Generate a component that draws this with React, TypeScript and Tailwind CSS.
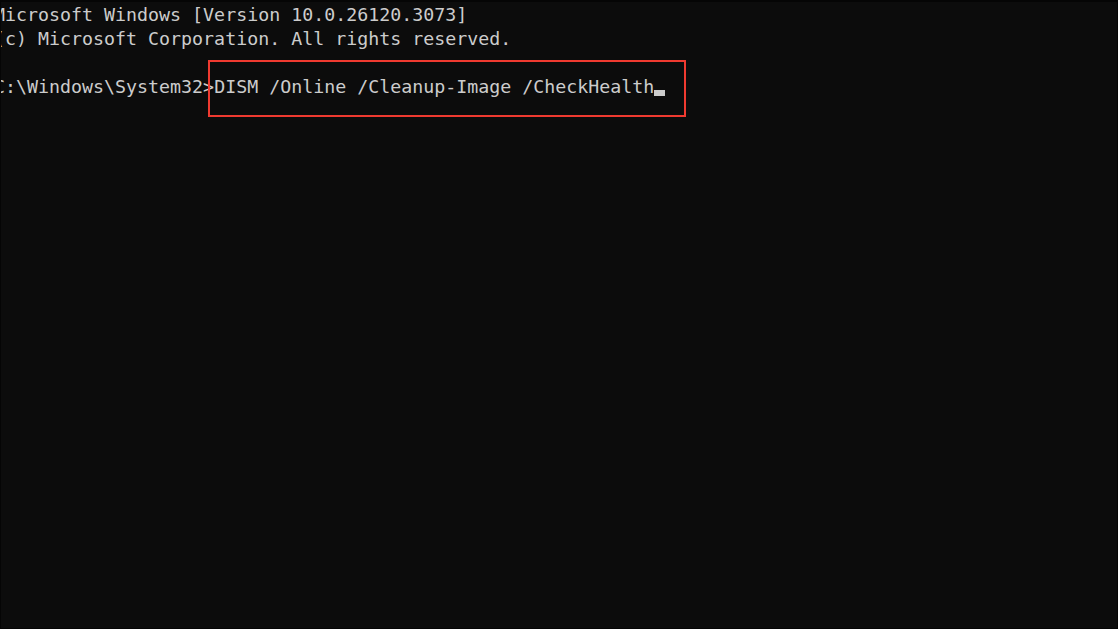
import React from "react";

const lines = [
  "Microsoft Windows [Version 10.0.26120.3073]",
  "(c) Microsoft Corporation. All rights reserved.",
  "",
];

const App = () => {
  return (
    <div className="w-[1118px] h-[629px] bg-[#0c0c0c] border-t-2 border-l border-r border-b border-[#050505] overflow-hidden">
      <div
        className="-ml-[7px] pt-[1px] text-[18.3px] leading-[24px] text-[#cccccc] whitespace-pre"
        style={{ fontFamily: '"DejaVu Sans Mono", "Liberation Mono", monospace' }}
      >
        {lines.map((line, i) => (
          <div key={i} className="h-[24px]">
            {line}
          </div>
        ))}
        <div className="h-[24px] flex">
          <span>C:\Windows\System32&gt;</span>
          <span className="relative">
            DISM /Online /Cleanup-Image /CheckHealth
            <span className="inline-block w-[11px] h-[6px] bg-[#cccccc] align-[-3px]"></span>
            {/* highlight box */}
            <span className="absolute -left-[6px] -top-[15px] w-[478px] h-[57px] border-2 border-[#f03a30]"></span>
          </span>
        </div>
      </div>
    </div>
  );
};

export default App;
